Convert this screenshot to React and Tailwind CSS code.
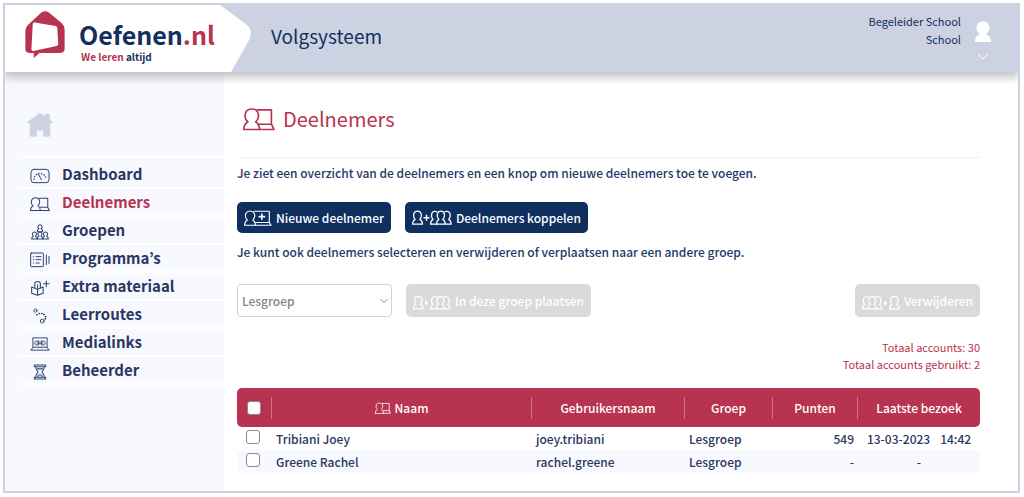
import React from "react";

function Svg({ viewBox, className, children, sw = 4 }) {
  return (
    <svg viewBox={viewBox} className={className} fill="none" stroke="currentColor" strokeWidth={sw} strokeLinejoin="round" strokeLinecap="round" aria-hidden="true">
      {children}
    </svg>
  );
}

const PERSON = "M2 67C3 54 6 48 15 44C6 36 4 25 9 14C15 1 39 1 45 14C50 25 47 36 39 44C47 48 50 55 51 67Z";

function PersonLaptop({ className, sw = 4 }) {
  return (
    <Svg viewBox="0 0 98 70" className={className} sw={sw}>
      <path d={PERSON} />
      <path d="M44 7H87V51H48M87 51L95 67H51" />
    </Svg>
  );
}

function PersonLaptopPlus({ className }) {
  return (
    <Svg viewBox="0 0 124 70" className={className} sw={5}>
      <path d={PERSON} />
      <path d="M44 5H112V55H50M112 55L120 67H51" />
      <path d="M67 29H91M79 17V41" strokeWidth="7" />
    </Svg>
  );
}

const GROUP = (
  <>
    <path d="M34 67H2C3 54 6 48 14 44C6 36 5 25 9 14C13 5 25 4 32 8" />
    <path d="M30 67C31 54 34 48 42 44C34 36 32 25 36 14C41 1 61 1 66 14C70 25 68 36 60 44C68 48 71 54 72 67Z" />
    <path d="M70 8C77 4 89 5 93 14C97 25 96 36 88 44C96 48 99 54 100 67H72" />
  </>
);
const SINGLE = <path d="M2 67C3 54 6 48 15 44C7 36 6 25 10 14C15 1 37 1 42 14C46 25 45 36 37 44C46 48 49 54 50 67Z" />;

function PersonToGroup({ className, arrow = false }) {
  return (
    <Svg viewBox="0 0 190 70" className={className} sw={6}>
      {SINGLE}
      {arrow ? <path d="M63 30L72 38L63 46Z" fill="currentColor" /> : <path d="M57 36H81M69 24V48" strokeWidth="7" />}
      <g transform="translate(86 0)">{GROUP}</g>
    </Svg>
  );
}

function GroupToPerson({ className }) {
  return (
    <Svg viewBox="0 0 190 70" className={className} sw={6}>
      <g>{GROUP}</g>
      <path d="M114 30L123 38L114 46Z" fill="currentColor" />
      <g transform="translate(136 0)">{SINGLE}</g>
    </Svg>
  );
}

function DashboardIcon() {
  return (
    <Svg viewBox="0 0 60 46" className="h-4 w-5" sw={3}>
      <rect x="3" y="3" width="54" height="40" rx="9" />
      <path d="M12 33C11 10 49 10 48 33" strokeDasharray="1 7" strokeWidth="4" />
      <path d="M25 17L34 34" />
    </Svg>
  );
}

function GroupIcon() {
  const p = "M1 22C1 17 3 15 6 14C1 10 3 2 9 2C15 2 17 10 12 14C15 15 17 17 17 22Z";
  return (
    <Svg viewBox="0 0 50 46" className="h-4 w-5" sw={3}>
      <path d={p} transform="translate(16 0)" />
      <path d={p} transform="translate(0 21)" />
      <path d={p} transform="translate(16 21)" />
      <path d={p} transform="translate(32 21)" />
    </Svg>
  );
}

function ProgramIcon() {
  return (
    <Svg viewBox="0 0 60 46" className="h-4 w-5" sw={3}>
      <rect x="2" y="2" width="38" height="41" rx="2" />
      <path d="M10 13H11M18 13H33M10 22H11M18 22H33M10 32H11M18 32H28M49 8V37M57 12V33" />
    </Svg>
  );
}

function ExtraIcon() {
  return (
    <Svg viewBox="0 0 54 46" className="h-4 w-5" sw={3}>
      <path d="M3 20L20 27L36 20V38L20 44L3 38ZM20 27V44" />
      <path d="M12 23V11C12 2 28 2 28 11V23M20 14V26M45 3V19M37 11H53" />
    </Svg>
  );
}

function RouteIcon() {
  return (
    <Svg viewBox="0 0 46 50" className="h-4 w-5" sw={3}>
      <circle cx="9" cy="8" r="5" />
      <circle cx="30" cy="41" r="6" />
      <path d="M13 21H14M20 17H21M28 17H29M35 20H36M40 27H41M39 34H40" strokeWidth="5" />
    </Svg>
  );
}

function MediaIcon() {
  return (
    <Svg viewBox="0 0 62 44" className="h-4 w-5" sw={3}>
      <path d="M9 33V3H53V33M9 33L2 41H60L53 33Z" />
      <path d="M27 13H20C13 13 13 25 20 25H27V13M35 13H42C49 13 49 25 42 25H35V13M22 19H40" />
    </Svg>
  );
}

function HourglassIcon() {
  return (
    <Svg viewBox="0 0 38 46" className="h-4 w-5" sw={3}>
      <path d="M3 3H35V8H3ZM3 38H35V43H3ZM7 8C7 18 13 20 13 23C13 26 7 28 7 38M31 8C31 18 25 20 25 23C25 26 31 28 31 38M12 14H26M13 35Q19 27 25 35" />
    </Svg>
  );
}

const NAV = [
  ["Dashboard", <DashboardIcon />],
  ["Deelnemers", <PersonLaptop className="h-4 w-5" sw={5} />],
  ["Groepen", <GroupIcon />],
  ["Programma’s", <ProgramIcon />],
  ["Extra materiaal", <ExtraIcon />],
  ["Leerroutes", <RouteIcon />],
  ["Medialinks", <MediaIcon />],
  ["Beheerder", <HourglassIcon />],
];

function Header() {
  return (
    <header className="relative flex h-[67px] shrink-0 bg-[#ccd2e1] shadow-[0_5px_8px_1px_rgba(0,0,0,0.22)]">
      <a href="#home" className="flex w-[215px] shrink-0 items-start bg-white pl-5 pt-[6px]">
        <svg viewBox="0 0 117 140" className="h-[47px] w-10 shrink-0" aria-hidden="true">
          <path d="M0 58Q0 48 9 40L47 5Q58 -3 69 4L108 36Q117 44 117 56V112Q117 125 104 125H42L25 140V125H12Q0 125 0 112Z" fill="#b8334f" />
          <path d="M28 34L90 45Q95 46 95 51L98 98Q98 103 93 104L24 119Q18 120 18 114L22 39Q23 33 28 34Z" fill="#fff" />
        </svg>
        <span className="ml-[14px] flex flex-col pt-[11px]">
          <span className="text-[25px] font-bold leading-6 text-[#12305f]">
            Oefenen<span className="text-[#b8334f]">.nl</span>
          </span>
          <span className="mt-[5px] pl-[2px] text-[10px] font-bold leading-3 text-[#12305f]">
            <span className="text-[#b8334f]">We leren</span> altijd
          </span>
        </span>
      </a>
      <svg viewBox="0 0 32 67" className="h-full w-8 shrink-0" aria-hidden="true">
        <path d="M0 0L27 20Q34 27 28 37L11 67H0Z" fill="#fff" />
      </svg>
      <div className="ml-[19px] pt-[17px] text-[19px] leading-7 text-[#12305f]">Volgsysteem</div>
      <div className="ml-auto flex pr-[25px]">
        <div className="pt-[7px] text-right text-[11px] leading-[18px] text-[#12305f]">
          <div>Begeleider School</div>
          <div>School</div>
        </div>
        <button type="button" aria-label="Account" className="ml-3 flex w-5 flex-col items-center pt-4 text-white">
          <svg viewBox="0 0 54 64" className="h-[21px] w-[18px]" fill="currentColor" aria-hidden="true">
            <path d="M2 64C3 49 9 43 18 40C0 28 5 1 27 1S54 28 36 40C45 43 51 49 52 64Z" />
          </svg>
          <svg viewBox="0 0 12 8" className="mt-[11px] h-2 w-3" fill="none" stroke="currentColor" aria-hidden="true">
            <path d="M1 1L6 6L11 1" />
          </svg>
        </button>
      </div>
    </header>
  );
}

function Sidebar() {
  return (
    <nav className="w-[219px] shrink-0 bg-[#f8f8ff] pl-[14px]">
      <a href="#home" aria-label="Home" className="flex h-[86px] border-b-2 border-white pl-2 pt-[41px] text-[#ccd2e1]">
        <svg viewBox="0 0 76 70" className="h-6 w-[26px]" fill="currentColor" aria-hidden="true">
          <path d="M0 27L36 1Q38 0 40 1L52 10V3H67V20L76 27V30H68V66Q68 69 65 69H47V51H29V69H11Q8 69 8 66V30H0Z" />
        </svg>
      </a>
      <ul className="pt-[3px]">
        {NAV.map(([label, icon]) => (
          <li key={label} className="h-7 border-b-2 border-white">
            <a href="#nav" className={"flex h-full items-center gap-3 pl-[11px] text-[15px] font-bold leading-6 " + (label === "Deelnemers" ? "text-[#b8334f]" : "text-[#2b3660]")}>
              <span className="mt-1 text-[#2b4470]">{icon}</span>
              {label}
            </a>
          </li>
        ))}
      </ul>
    </nav>
  );
}

const DARK = "flex h-[31px] items-center gap-1 rounded-[5px] bg-[#0f2f5f] px-[7px] text-[12px] font-medium text-white";
const GREY = "flex h-[33px] items-center gap-1 rounded-[5px] bg-[#dadada] px-[7px] text-[12px] font-medium text-white";
const ROWS = [
  ["Tribiani Joey", "joey.tribiani", "Lesgroep", "549", "13-03-2023", "14:42"],
  ["Greene Rachel", "rachel.greene", "Lesgroep", "-", "-", ""],
];

function Th({ children, width = "", last = false }) {
  return (
    <th className={"h-[39px] p-0 font-medium " + width}>
      <div className={"flex h-[22px] items-center justify-center gap-1 " + (last ? "" : "border-r border-[#d0758a]")}>{children}</div>
    </th>
  );
}

function Check({ label }) {
  return <input type="checkbox" aria-label={label} className="block size-[14px] appearance-none rounded-[3px] border border-[#8b8b8b] bg-white checked:bg-[#0f2f5f]" />;
}

export default function App() {
  return (
    <div className="flex min-h-screen bg-white pb-[4px] pl-[3px] pr-[4px] pt-[3px] font-['Noto_Sans_CJK_JP','Noto_Sans',sans-serif]">
      <div className="flex flex-1 flex-col overflow-hidden border-2 border-[#ccd2e1]">
        <Header />
        <div className="flex flex-1">
          <Sidebar />
          <main className="min-w-0 flex-1 pl-[13px] pr-[38px] text-[12px] font-medium leading-5 text-[#1d3a68]">
            <h1 className="flex h-[86px] items-center gap-2 border-b border-[#eeeef6] pl-[6px] pt-2 text-[20px] font-normal leading-7 text-[#b8334f]">
              <PersonLaptop className="h-6 w-8" sw={5} />
              Deelnemers
            </h1>
            <p className="mt-[5px]">Je ziet een overzicht van de deelnemers en een knop om nieuwe deelnemers toe te voegen.</p>
            <div className="mt-[19px] flex gap-[14px]">
              <button type="button" className={DARK}>
                <PersonLaptopPlus className="h-4 w-7" />
                Nieuwe deelnemer
              </button>
              <button type="button" className={DARK}>
                <PersonToGroup className="h-[15px] w-10" />
                Deelnemers koppelen
              </button>
            </div>
            <p className="mt-[9px]">Je kunt ook deelnemers selecteren en verwijderen of verplaatsen naar een andere groep.</p>
            <div className="mt-[22px] flex">
              <div className="relative w-[155px]">
                <select aria-label="Lesgroep" className="h-[33px] w-full appearance-none rounded-[4px] border border-[#ccd2e1] bg-white pl-1 text-[12px] text-[#858585]">
                  <option>Lesgroep</option>
                </select>
                <svg viewBox="0 0 8 6" className="pointer-events-none absolute right-1 top-[14px] h-[6px] w-2 text-[#8a8a8a]" fill="none" stroke="currentColor" aria-hidden="true">
                  <path d="M0.500 1L4 4.500L7.500 1" />
                </svg>
              </div>
              <button type="button" className={GREY + " ml-[14px]"}>
                <PersonToGroup arrow className="mt-1 h-[15px] w-[38px]" />
                In deze groep plaatsen
              </button>
              <button type="button" className={GREY + " ml-auto"}>
                <GroupToPerson className="mt-1 h-[15px] w-[38px]" />
                Verwijderen
              </button>
            </div>
            <div className="mt-[22px] text-right text-[11px] font-normal leading-[17px] text-[#b8334f]">
              <div>Totaal accounts: 30</div>
              <div>Totaal accounts gebruikt: 2</div>
            </div>
            <table className="mt-[15px] w-full table-fixed border-separate border-spacing-0">
              <thead className="text-white [&_th]:bg-[#b8334f] [&_th:first-child]:rounded-l-[5px] [&_th:last-child]:rounded-r-[5px]">
                <tr>
                  <Th width="w-[35px]"><Check label="Alles selecteren" /></Th>
                  <Th><PersonLaptop className="h-3 w-4" sw={5} />Naam</Th>
                  <Th width="w-[153px]">Gebruikersnaam</Th>
                  <Th width="w-[88px]">Groep</Th>
                  <Th width="w-[85px]">Punten</Th>
                  <Th width="w-[122px]" last>Laatste bezoek</Th>
                </tr>
              </thead>
              <tbody className="text-[#2b3660] [&_td]:h-[23px] [&_td]:p-0">
                {ROWS.map(([name, user, group, points, date, time], i) => (
                  <tr key={name} className={i % 2 ? "[&_td]:bg-[#f8f8ff]" : ""}>
                    <td className="rounded-l-[4px]"><div className="pb-[3px] pl-[9px]"><Check label={name} /></div></td>
                    <td><div className="pl-1">{name}</div></td>
                    <td><div className="pl-1">{user}</div></td>
                    <td><div className="pl-1">{group}</div></td>
                    <td><div className="pr-1 text-right">{points}</div></td>
                    <td className="rounded-r-[4px]">
                      <div className="flex justify-center gap-[10px]">
                        <span>{date}</span>
                        {time && <span>{time}</span>}
                      </div>
                    </td>
                  </tr>
                ))}
              </tbody>
            </table>
          </main>
        </div>
      </div>
    </div>
  );
}
